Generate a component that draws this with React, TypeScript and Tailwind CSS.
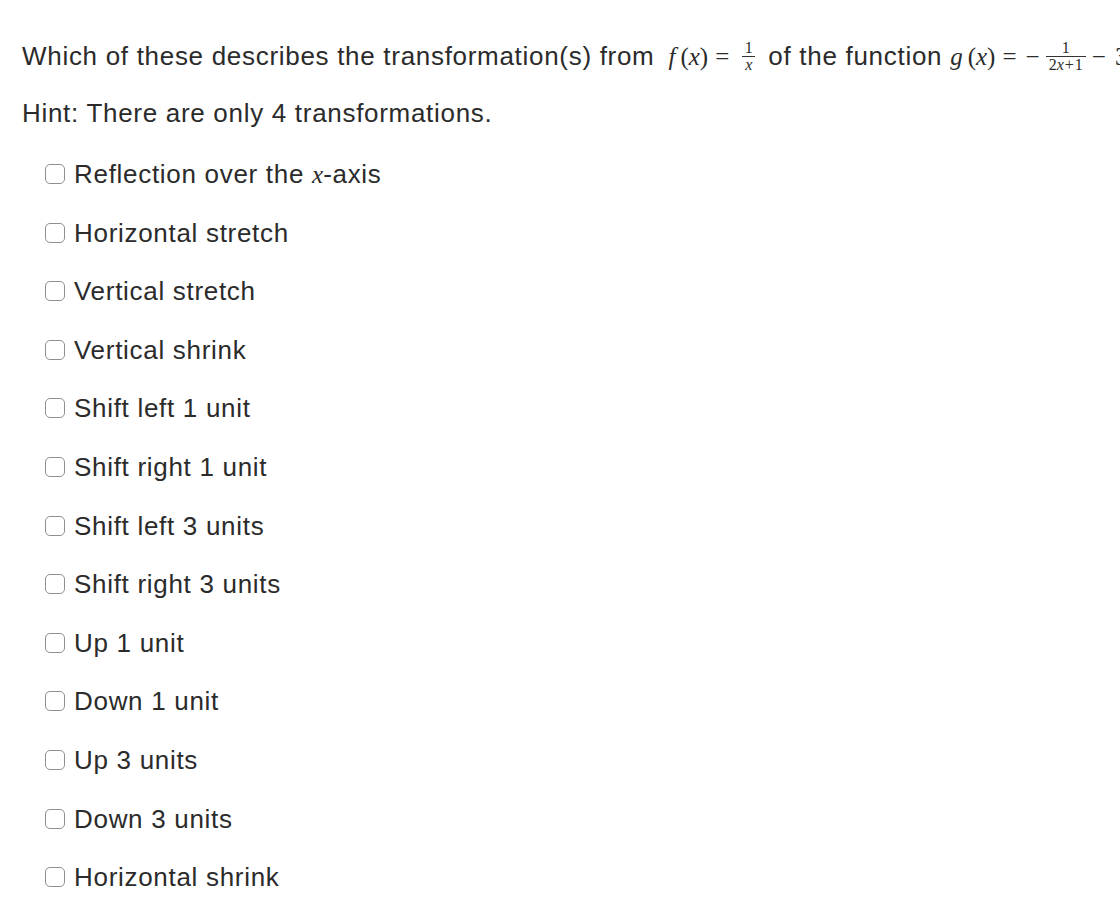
import React from 'react';

const options = [
  'Reflection over the x-axis',
  'Horizontal stretch',
  'Vertical stretch',
  'Vertical shrink',
  'Shift left 1 unit',
  'Shift right 1 unit',
  'Shift left 3 units',
  'Shift right 3 units',
  'Up 1 unit',
  'Down 1 unit',
  'Up 3 units',
  'Down 3 units',
  'Horizontal shrink',
];

const Frac = ({ num, den }: { num: React.ReactNode; den: React.ReactNode }) => (
  <span className="inline-flex flex-col items-center align-middle text-[16px] leading-[16px] mx-[6px] relative -top-[3px]">
    <span className="px-[2px]">{num}</span>
    <span className="border-t border-[#333] px-[3px] w-full text-center">{den}</span>
  </span>
);

const M = ({ children }: { children: React.ReactNode }) => (
  <span className="font-['Liberation_Serif',serif] text-[25px] leading-none tracking-normal">{children}</span>
);

const I = ({ children }: { children: React.ReactNode }) => <span className="italic">{children}</span>;

function Label({ text }: { text: string }) {
  if (text.includes('x-axis')) {
    return (
      <span>
        Reflection over the <M><I>x</I></M>-axis
      </span>
    );
  }
  return <span>{text}</span>;
}

export default function App() {
  return (
    <div className="w-[1120px] h-[921px] overflow-hidden bg-white text-[#2b2b2b] font-['Liberation_Sans',Arial,sans-serif] text-[26px] tracking-[0.7px]">
      <div className="pl-[22px] pt-[38px]">
        <p className="whitespace-nowrap h-[36px] leading-[36px]">
          Which of these describes the transformation(s) from{' '}
          <M>
            <span className="ml-[6px]"><I>f</I></span>
            <span className="ml-[5px]">(<I>x</I>)</span>
            <span className="mx-[7px]">=</span>
            <Frac num="1" den={<I>x</I>} />
          </M>
          <span className="ml-[7px]">of the function</span>{' '}
          <M>
            <I>g</I>
            <span className="ml-[5px]">(<I>x</I>)</span>
            <span className="mx-[7px]">=</span>
            <span className="ml-[2px]">−</span>
            <Frac num="1" den={<span>2<I>x</I><span className="mx-[1px]">+</span>1</span>} />
            <span>−</span>
            <span className="ml-[9px]">3</span>
          </M>
        </p>
        <p className="mt-[21px] h-[36px] leading-[36px]">Hint: There are only 4 transformations.</p>
      </div>
      <div className="pl-[45px] pt-[25px] flex flex-col gap-[22.6px]">
        {options.map((o) => (
          <label key={o} className="flex items-center gap-[9px] h-[36px] leading-[36px]">
            <span className="w-[20px] h-[20px] rounded-[5px] border-[1.5px] border-[#8f8f8f] bg-white shrink-0" />
            <Label text={o} />
          </label>
        ))}
      </div>
    </div>
  );
}
